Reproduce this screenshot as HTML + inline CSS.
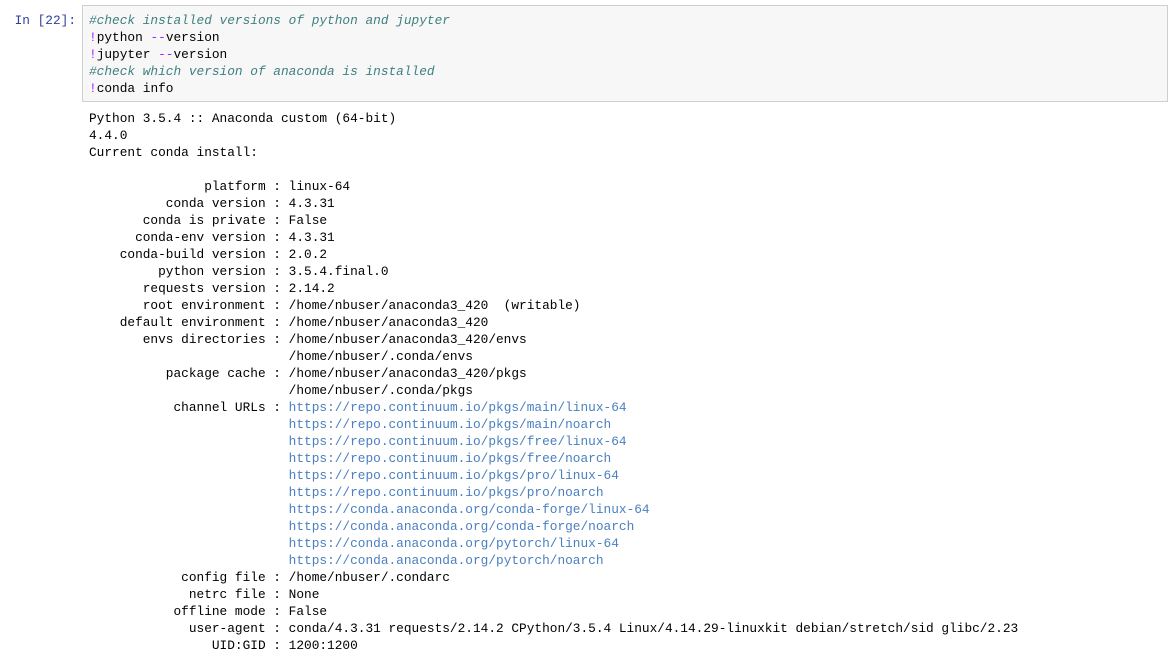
<!DOCTYPE html>
<html><head><meta charset="utf-8"><style>
html,body{margin:0;padding:0;background:#fff;width:1169px;height:666px;overflow:hidden}
body{font-family:"Liberation Mono",monospace;font-size:12.8px;color:#000}
.prompt{position:absolute;left:0;top:12px;width:76px;text-align:right;color:#303F9F;font-size:12.8px;line-height:17px}
.inbox{position:absolute;left:82px;top:5px;width:1086px;height:97px;background:#f7f7f7;border:1px solid #cfcfcf;box-sizing:border-box}
pre{margin:0;font-family:inherit;font-size:12.8px;line-height:17px;white-space:pre}
.code{position:absolute;left:89px;top:12px}
.out{position:absolute;left:89px;top:110px}
.c{color:#408080;font-style:italic}
.m{color:#AA22FF}
.u{color:#4a7fc1}
</style></head><body>
<div class="prompt">In&nbsp;[22]:</div>
<div class="inbox"></div>
<pre class="code"><span class="c">#check installed versions of python and jupyter</span>
<span class="m">!</span>python <span class="m">--</span>version
<span class="m">!</span>jupyter <span class="m">--</span>version
<span class="c">#check which version of anaconda is installed</span>
<span class="m">!</span>conda info</pre>
<pre class="out">Python 3.5.4 :: Anaconda custom (64-bit)
4.4.0
Current conda install:

               platform : linux-64
          conda version : 4.3.31
       conda is private : False
      conda-env version : 4.3.31
    conda-build version : 2.0.2
         python version : 3.5.4.final.0
       requests version : 2.14.2
       root environment : /home/nbuser/anaconda3_420  (writable)
    default environment : /home/nbuser/anaconda3_420
       envs directories : /home/nbuser/anaconda3_420/envs
                          /home/nbuser/.conda/envs
          package cache : /home/nbuser/anaconda3_420/pkgs
                          /home/nbuser/.conda/pkgs
           channel URLs : <span class="u">https://repo.continuum.io/pkgs/main/linux-64</span>
                          <span class="u">https://repo.continuum.io/pkgs/main/noarch</span>
                          <span class="u">https://repo.continuum.io/pkgs/free/linux-64</span>
                          <span class="u">https://repo.continuum.io/pkgs/free/noarch</span>
                          <span class="u">https://repo.continuum.io/pkgs/pro/linux-64</span>
                          <span class="u">https://repo.continuum.io/pkgs/pro/noarch</span>
                          <span class="u">https://conda.anaconda.org/conda-forge/linux-64</span>
                          <span class="u">https://conda.anaconda.org/conda-forge/noarch</span>
                          <span class="u">https://conda.anaconda.org/pytorch/linux-64</span>
                          <span class="u">https://conda.anaconda.org/pytorch/noarch</span>
            config file : /home/nbuser/.condarc
             netrc file : None
           offline mode : False
             user-agent : conda/4.3.31 requests/2.14.2 CPython/3.5.4 Linux/4.14.29-linuxkit debian/stretch/sid glibc/2.23
                UID:GID : 1200:1200</pre>
</body></html>
